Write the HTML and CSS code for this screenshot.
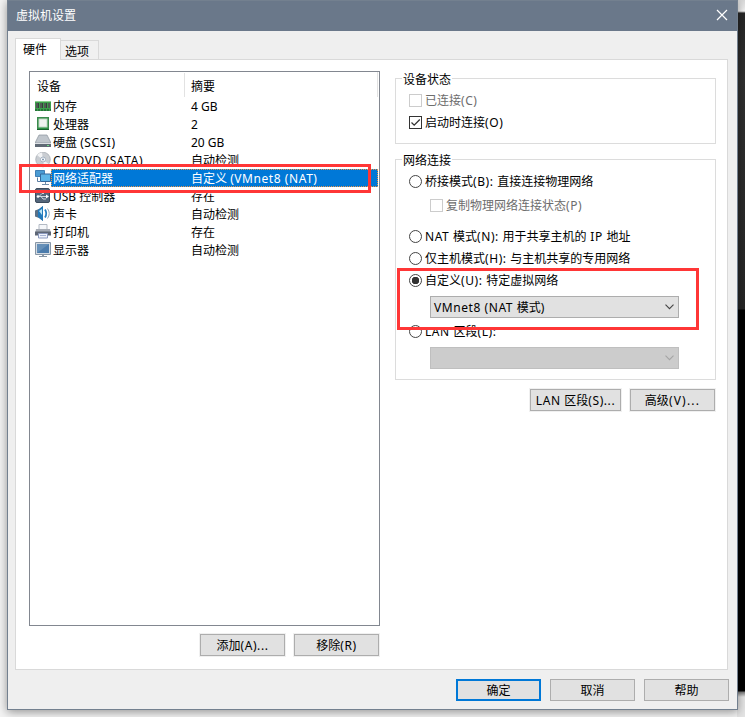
FILE: index.html
```html
<!DOCTYPE html>
<html lang="zh-CN">
<head>
<meta charset="utf-8">
<title>虚拟机设置</title>
<link rel="stylesheet" href="styles.css">
</head>
<body>
<div class="window">
  <header class="titlebar"><span>虚拟机设置</span>
    <svg class="close" width="12" height="12" viewBox="0 0 12 12"><path d="M1 1L11 11M11 1L1 11" stroke="#fff" stroke-width="1.2" fill="none"/></svg>
  </header>
  <nav class="tabs"><div class="tab active">硬件</div><div class="tab">选项</div></nav>
  <main class="panel">
    <section class="left">
      <div class="list">
        <div class="row head"><span class="name">设备</span><span class="sum">摘要</span></div>
        <div class="row">
          <svg class="ico" viewBox="0 0 16 16"><rect y="3" width="16" height="10" fill="#3d9d4c"/><path d="M0 3.5H16" stroke="#8bd08f"/><path d="M1 5h3v5H1zM5 5h3v5H5zM9 5h3v5H9zM13 5h2v5h-2z" fill="#344039"/><path d="M2 5v5M6 5v5M10 5v5M14 5v5" stroke="#87918a" stroke-width=".7"/><path d="M0 12h16" stroke="#26743a" stroke-width="2" stroke-dasharray="2 1"/></svg>
          <span class="name">内存</span><span class="sum">4 GB</span></div>
        <div class="row">
          <svg class="ico" viewBox="0 0 16 16"><rect x="2.5" y="1.5" width="11" height="12" fill="#2d9144" stroke="#3a8a4c"/><rect x="4" y="3" width="8" height="8" fill="#f0f3f0" stroke="#c3d8c6"/><path d="M2 13.500h12" stroke="#175f2c"/></svg>
          <span class="name">处理器</span><span class="sum">2</span></div>
        <div class="row">
          <svg class="ico" viewBox="0 0 16 16"><path d="M4 1H12L16 9H0Z" fill="#c0c6cd" stroke="#8b939d" stroke-width=".7"/><path d="M0 9h16v4H0z" fill="#5f6975"/><path d="M0 9.500H16" stroke="#dde1e5"/><path d="M12 11.500h2" stroke="#6fe084"/></svg>
          <span class="name">硬盘 <i>(SCSI)</i></span><span class="sum">20 GB</span></div>
        <div class="row">
          <svg class="ico" viewBox="0 0 16 16"><circle cx="8" cy="7.500" r="7.300" fill="#c9cdd2" stroke="#a4a9b0" stroke-width=".7"/><path d="M8 8L2 3A8 8 0 0 1 7 .5ZM8 8L14 12A8 8 0 0 1 9 14.500Z" fill="#f2f3f5"/><circle cx="8" cy="7.500" r="2.500" fill="#fff" stroke="#a3b1c1"/><circle cx="8" cy="7.500" r="1" fill="#7890ab"/></svg>
          <span class="name"><i>CD/DVD (SATA)</i></span><span class="sum">自动检测</span></div>
        <div class="row selected">
          <svg class="ico" viewBox="0 0 16 16"><path d="M.5.5h9v6h-9z" fill="#4a9bd3" stroke="#3f7fb5"/><path d="M2.500 7.500v4H5" fill="none" stroke="#5c7fa3"/><path d="M5.500 4h10v7.500h-10z" fill="#5eb5e7" stroke="#33689c"/><path d="M10.500 12v2M7 14.500h7" stroke="#6f8dab"/></svg>
          <div class="fill"><span class="name">网络适配器</span><span class="sum">自定义 <i>(VMnet8 (NAT)</i></span></div></div>
        <div class="row">
          <svg class="ico" viewBox="0 0 16 16"><rect x=".5" y=".5" width="14" height="14" rx="1.500" fill="#53657a" stroke="#3c4b5d"/><path d="M2 8.500H12M4 8.500L7 5.500H9M6 8.500L8 11H11" fill="none" stroke="#d0d7df"/><circle cx="3" cy="8.500" r="1.300" fill="#fff"/><path d="M11 6.500l3 2-3 2z" fill="#fff"/></svg>
          <span class="name">USB 控制器</span><span class="sum">存在</span></div>
        <div class="row">
          <svg class="ico" viewBox="0 0 16 16"><path d="M0 4.500L4 3 8 0V15L4 12 0 10.500Z" fill="#5b7187"/><path d="M3 4L8 0V15L3 11Z" fill="#227abc"/><path d="M4 5L7 3V9Z" fill="#b8e4f6"/><path d="M10 3.500Q12.500 7.500 10 11.500" fill="none" stroke="#2680c2" stroke-width="1.800"/><path d="M12.500 2.500Q16 7.500 12.500 12.500" fill="none" stroke="#91a8bb"/></svg>
          <span class="name">声卡</span><span class="sum">自动检测</span></div>
        <div class="row">
          <svg class="ico" viewBox="0 0 16 16"><path d="M4 .5h8V6H4z" fill="#f5f7fa" stroke="#b3bac4"/><path d="M1 5H15L16 11H0Z" fill="#a5abb5"/><path d="M0 7.500h16v4H0z" fill="#5d6675"/><path d="M3.500 9.500H12.500V14H3.500Z" fill="#eef2fb" stroke="#8c9abf"/><path d="M5 11.500h6" stroke="#a5b3d3"/></svg>
          <span class="name">打印机</span><span class="sum">存在</span></div>
        <div class="row">
          <svg class="ico" viewBox="0 0 16 16"><path d="M.5.500h15v12H.5z" fill="#d5dce3" stroke="#8796a6"/><path d="M2 2h12v9H2z" fill="#4c7cac"/><path d="M2 2H14L2 11Z" fill="#6690b8"/><path d="M7 13h2v1H7z" fill="#8998a7"/><path d="M4 14.500h8" stroke="#8494a5"/></svg>
          <span class="name">显示器</span><span class="sum">自动检测</span></div>
      </div>
      <div class="buttons"><button>添加<i>(A)...</i></button><button>移除<i>(R)</i></button></div>
    </section>
    <section class="right">
      <div class="group status">
        <div class="legend">设备状态</div>
        <div class="opt off"><span class="box"></span>已连接<i>(C)</i></div>
        <div class="opt"><span class="box"><svg width="11" height="11" viewBox="0 0 11 11"><path d="M1.500 5.500L4.200 8.200L9.800 2.500" fill="none" stroke="#333" stroke-width="1.300"/></svg></span>启动时连接<i>(O)</i></div>
      </div>
      <div class="group network">
        <div class="legend">网络连接</div>
        <div class="opt bridge"><span class="radio"></span><span>桥接模式<i>(B): </i>直接连接物理网络</span></div>
        <div class="opt off sub"><span class="box"></span>复制物理网络连接状态<i>(P)</i></div>
        <div class="opt"><span class="radio"></span><span><i>NAT </i>模式<i>(N): </i>用于共享主机的<i> IP </i>地址</span></div>
        <div class="opt"><span class="radio"></span><span>仅主机模式<i>(H): </i>与主机共享的专用网络</span></div>
        <div class="opt"><span class="radio on"></span><span>自定义<i>(U): </i>特定虚拟网络</span></div>
        <div class="select"><span><i>VMnet8 (NAT </i>模式<i>)</i></span><svg width="9" height="6" viewBox="0 0 9 6"><path d="M.5.7L4.500 4.700L8.500.7" fill="none" stroke="#444" stroke-width="1.100"/></svg></div>
        <div class="opt lan"><span class="radio"></span><span><i>LAN </i>区段<i>(L):</i></span></div>
        <div class="select disabled"><svg width="9" height="6" viewBox="0 0 9 6"><path d="M.5.7L4.500 4.700L8.500.7" fill="none" stroke="#a5a5a5" stroke-width="1.100"/></svg></div>
      </div>
      <div class="buttons adv"><button class="wide"><i>LAN </i>区段<i>(S)...</i></button><button>高级<i class="loose">(V)...</i></button></div>
    </section>
  </main>
  <footer class="buttons foot"><button class="primary">确定</button><button>取消</button><button>帮助</button></footer>
</div>
<div class="mark mark-row"></div>
<div class="mark mark-custom"></div>
</body>
</html>
```
FILE: styles.css
```css
* { box-sizing: border-box; }
html { height: 717px; overflow: hidden; }
body {
  margin: 0; padding-left: 7px; width: 745px; height: 717px; overflow: hidden; position: relative;
  font: 12px/18px "Noto Sans", "Noto Sans CJK SC", sans-serif; color: #000; white-space: nowrap;
  background:
    linear-gradient(#d8d8d8, #f4f4f4 11px, #aaa 12px, #262626 13px, #303030 80px, #252525 309px, #000 310px, #000 691px, #777 692px, #e4e4e4 697px) right top / 8px 717px no-repeat,
    #f3f3f3;
}
i { font-style: normal; letter-spacing: .57px; }
.loose { letter-spacing: 1.2px; }
svg { display: block; flex: none; }
.window {
  width: 731px; height: 710px; border: 1px solid #73808f; border-top: 0; background: #efefef;
  box-shadow: 0 2px 9px rgba(0, 0, 0, .4);
}
.titlebar {
  height: 31px; padding: 0 9px 0 8px; display: flex; align-items: center; justify-content: space-between;
  background: #6a788a; border-top: 1px solid #73808f; color: #fff;
}
.close { margin-top: -2px; }
.tabs { height: 28px; padding: 7px 0 0 7px; display: flex; align-items: flex-end; }
.tab {
  width: 38px; height: 19px; padding-left: 4px; line-height: 21px; border: 1px solid #d9d9d9;
  border-left: 0; border-bottom: 0; background: #f0f0f0;
}
.tab.active {
  width: 46px; height: 22px; margin-bottom: -1px; padding-left: 7px; line-height: 21px; border-left: 1px solid #d9d9d9;
  background: #fff; position: relative;
}
.panel {
  width: 713px; height: 611px; margin-left: 7px; border: 1px solid #d9d9d9; background: #fff;
  display: flex; padding: 11px 11px 0 13px;
}
.left { width: 351px; }
.list { height: 555px; border: 1px solid #828790; }
.row { height: 18px; line-height: 20px; display: flex; padding-left: 5px; }
.row .name { width: 140px; padding-left: 2px; }
.ico { width: 16px; height: 16px; margin-top: 1px; }
.head { height: 25px; line-height: 29px; margin-right: 1px; border-right: 1px solid #e2e2e2; }
.row.head .name { width: 150px; border-right: 1px solid #e2e2e2; margin-top: 1px; line-height: 27px; }
.head .sum { padding-left: 6px; }
.fill {
  display: flex; flex: 1; margin-right: 1px; background: #0078d7; color: #fff;
  outline: 1px dotted #e8954a; outline-offset: -1px;
}
.buttons { display: flex; justify-content: flex-end; gap: 9px; margin-top: 8px; }
.left .buttons { padding-right: 1px; }
button {
  width: 85px; height: 22px; padding: 0; border: 1px solid #adadad; background: #e1e1e1;
  font: inherit; line-height: 22px; color: #000; outline: 1px solid #f0f0f0;
}
.right { width: 321px; margin-left: 15px; padding-top: 7px; }
.group { border: 1px solid #dcdcdc; padding-left: 13px; }
.legend {
  width: max-content; height: 18px; line-height: 19px; margin: -9px 0 0 -7px; padding: 0 1px; background: #fff;
}
.status { height: 66px; }
.status .opt { height: 22px; line-height: 20px; }
.status .legend + .opt { margin-top: 2px; }
.box { width: 13px; height: 13px; margin: -1px 3px 0 0; border: 1px solid #333; background: #fff; flex: none; }
.network { height: 221px; margin-top: 15px; }
.opt { height: 22px; display: flex; align-items: center; }
.off { color: #6d6d6d; }
.off .box { border-color: #ccc; }
.radio {
  width: 13px; height: 13px; margin: -2px 3px 0 0; border: 1px solid #444; border-radius: 50%;
  background: #fff; flex: none;
}
.radio.on { background: radial-gradient(circle, #333 3.500px, #fff 4px); }
.bridge { margin-top: 2px; }
.sub { margin: 2px 0 9px 21px; }
.select {
  width: 249px; height: 22px; margin-left: 21px; padding: 0 4px 0 3px; display: flex; align-items: center;
  justify-content: space-between; border: 1px solid #adadad; background: #e1e1e1; margin-top: 4px;
}
.select span { line-height: 20px; padding-top: 1px; }
.select.disabled { background: #ccc; border-color: #bfbfbf; justify-content: flex-end; }
.lan { margin-top: 3px; }
.buttons.adv { margin-top: 9px; padding-right: 1px; }
button.wide { width: 91px; }
.foot { padding-right: 8px; margin-top: 9px; }
.foot button { outline: 0; }
button.primary { border: 2px solid #0078d7; line-height: 20px; }
.mark { position: absolute; border: 3px solid #ff3636; }
.mark-row { left: 19px; top: 164px; width: 352px; height: 29px; }
.mark-custom { left: 397px; top: 268px; width: 302px; height: 62px; }
```
